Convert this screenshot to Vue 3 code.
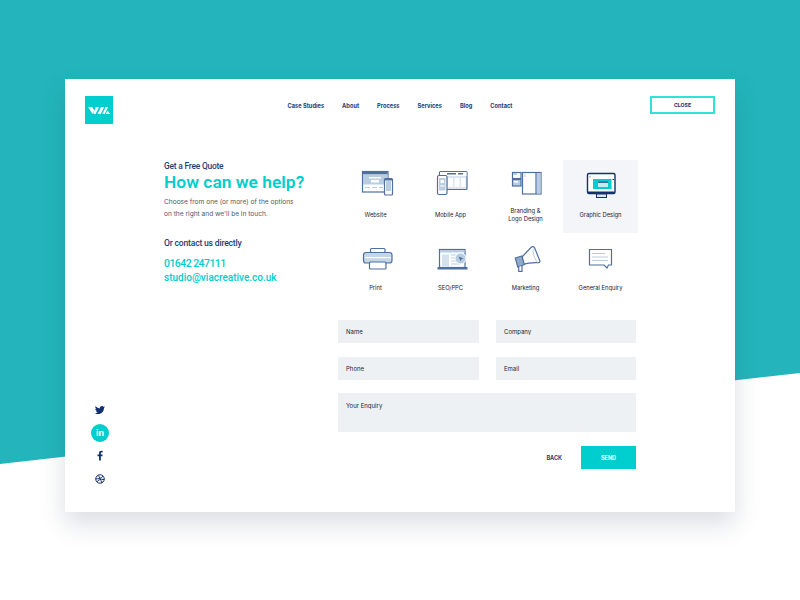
<template>
  <div class="page">
    <div class="backdrop"></div>
    <div class="card">
      <header class="top">
        <div class="logo">
          <svg width="28" height="28" viewBox="0 0 28 28">
            <path d="M3 11h4.200l2 3.500L7.600 18zM10.800 11H14l-3.500 7H8.800l-.4-1zM16 11h3.200l-3.500 7h-3.200zM20.800 11h2.400l-3.500 7h-2.400zM22.400 14.600l2.800 3.400h-4.500z" fill="#fff" />
          </svg>
        </div>
        <nav class="menu">
          <a v-for="item in menu" :key="item">{{ item }}</a>
        </nav>
        <button class="close">CLOSE</button>
      </header>

      <div class="content">
        <aside class="social">
          <div class="soc">
            <svg width="10" height="10" viewBox="0 0 24 24">
              <path fill="#12306e" d="M23.900 4.600c-.9.400-1.800.700-2.800.800 1-.6 1.800-1.600 2.200-2.700-1 .6-2 1-3.100 1.200A4.900 4.900 0 0 0 11.800 8.400 14 14 0 0 1 1.600 3.200a4.900 4.900 0 0 0 1.500 6.600c-.8 0-1.600-.2-2.200-.6v.1c0 2.400 1.700 4.400 3.900 4.800-.7.200-1.500.2-2.200.1.600 2 2.400 3.400 4.600 3.400A9.900 9.900 0 0 1 0 19.500 14 14 0 0 0 7.500 21.700c9.100 0 14.300-7.700 14-14.600 1-.7 1.800-1.600 2.400-2.500z" />
            </svg>
          </div>
          <div class="soc"><span class="linked">in</span></div>
          <div class="soc">
            <svg width="10" height="11" viewBox="0 0 24 24">
              <path fill="#12306e" d="M14 24V13.500h3.600l.6-4.200H14V6.700c0-1.200.4-2 2.100-2h2.200V.9C17.900.8 16.600.7 15.100.7c-3.200 0-5.400 1.900-5.400 5.500v3.100H6v4.200h3.700V24z" />
            </svg>
          </div>
          <div class="soc">
            <svg width="10" height="10" viewBox="0 0 20 20">
              <g fill="none" stroke="#12306e" stroke-width="2">
                <circle cx="10" cy="10" r="8.500" />
                <path d="M6 2.500c3 3.500 6 9 7.500 15.500M1.500 9.500c5 .5 11-.5 14.500-5M3.500 16c2.500-4 7-6.500 15-5" />
              </g>
            </svg>
          </div>
        </aside>

        <section class="intro">
          <p class="eyebrow">Get a Free Quote</p>
          <h1>How can we help?</h1>
          <p class="blurb">Choose from one (or more) of the options<br />on the right and we'll be in touch.</p>
          <p class="direct">Or contact us directly</p>
          <p class="phone">01642 247111</p>
          <p class="mail">studio@viacreative.co.uk</p>
        </section>

        <section class="right">
          <div class="options">
            <div class="option">
              <svg viewBox="0 0 75 45">
                <rect class="ln" x="24.500" y="6.500" width="25.500" height="20.500" fill="#fff" />
                <rect class="mid" x="25" y="7" width="24.500" height="2.500" />
                <rect class="soft" x="25" y="9.500" width="24.500" height="10" />
                <rect x="31" y="12" width="12" height="1.500" fill="#fff" />
                <rect x="33" y="15" width="8" height="2.500" fill="#fff" />
                <path class="lt" d="M27 22.500h5M34 22.500h5M41 22.500h4" />
                <rect class="ln" x="46.500" y="13.500" width="8" height="16.500" rx="1" fill="#fff" />
                <rect class="soft" x="48" y="16" width="5" height="10" />
                <rect class="mid" x="47" y="14" width="7" height="1.500" />
              </svg>
              <span>Website</span>
            </div>
            <div class="option">
              <svg viewBox="0 0 75 45">
                <rect class="ln" x="26.500" y="6.500" width="27.500" height="18" rx="1" fill="#dce6f0" />
                <rect x="27" y="7" width="26.500" height="4" fill="#fff" />
                <path class="mid" d="M34 8h9v1.500h-9zM45 8h5v1.500h-5z" />
                <path d="M35 13h5v9h-5zM41.500 13h5v9h-5zM48 13h4.500v9H48z" fill="#fff" />
                <rect class="ln" x="24.500" y="10.500" width="9.500" height="19" rx="1.500" fill="#fff" />
                <rect class="soft" x="26" y="13" width="6.500" height="12.500" />
                <rect x="27.500" y="15" width="3.500" height="3" fill="#fff" />
                <rect x="27" y="20.500" width="4.500" height="1" fill="#fff" />
              </svg>
              <span>Mobile App</span>
            </div>
            <div class="option">
              <svg viewBox="0 0 75 45">
                <rect class="ln" x="24.500" y="7.500" width="8.500" height="6" fill="#fff" />
                <rect class="soft" x="25" y="8" width="4" height="2" />
                <rect class="ln" x="24.500" y="14.500" width="8.500" height="6.500" fill="#b9cde0" />
                <rect x="26" y="16" width="4" height="1.500" fill="#fff" />
                <rect class="ln" x="34.500" y="7.500" width="18.500" height="21.500" fill="#fff" />
                <rect class="soft" x="48.500" y="8" width="4" height="20.500" />
                <rect x="36" y="9" width="2" height="3" fill="#dce6f0" />
                <path class="ln" d="M48 7.500v21.500" />
              </svg>
              <span>Branding &amp;<br />Logo Design</span>
            </div>
            <div class="option active">
              <svg viewBox="0 0 75 45">
                <rect x="24.500" y="8.500" width="27.500" height="20" rx="1.500" fill="#fff" stroke="#12306e" stroke-width="1.400" />
                <rect x="25" y="26.500" width="26.500" height="2" fill="#12306e" />
                <rect x="30" y="14" width="18.500" height="10" fill="#00cdcd" />
                <rect x="35" y="16.500" width="10" height="5.500" fill="#bfeeee" />
                <rect x="35" y="16.500" width="10" height="1.200" fill="#12306e" />
                <rect x="49.500" y="14" width="1.500" height="1" fill="#12306e" />
                <rect x="26" y="11" width="2" height="1.500" fill="#b9cde0" />
                <rect x="33.500" y="29" width="10" height="3.500" fill="#dde4ee" stroke="#12306e" stroke-width="1" />
              </svg>
              <span>Graphic Design</span>
            </div>
            <div class="option">
              <svg viewBox="0 0 75 45">
                <rect class="ln" x="32.500" y="10.500" width="14.500" height="4" rx="1" fill="#fff" />
                <rect class="ln" x="25.500" y="14.500" width="28.500" height="10.500" rx="2.500" fill="#c5d6e6" />
                <rect x="27" y="19" width="26" height="1.200" fill="#fff" />
                <rect class="ln" x="31.500" y="24" width="16.500" height="7" rx="1" fill="#fff" />
              </svg>
              <span>Print</span>
            </div>
            <div class="option">
              <svg viewBox="0 0 75 45">
                <rect class="ln" x="26.500" y="11.500" width="25.500" height="18" fill="#fff" />
                <rect class="soft" x="27" y="12" width="24.500" height="2.500" />
                <rect x="29" y="16.500" width="7" height="12" fill="#d5e1ec" />
                <path class="lt" d="M38 17h5M38 20h4M38 23h9M38 26h9" />
                <rect class="mid" x="24.500" y="29" width="30" height="2.500" />
                <circle cx="47.500" cy="20.500" r="5.500" fill="#b9cde0" stroke="#fff" stroke-width="1" />
                <path class="mid" d="M45.500 18.500l5 2-2 .8-.8 2z" />
              </svg>
              <span>SEO/PPC</span>
            </div>
            <div class="option">
              <svg viewBox="0 0 75 45">
                <path class="ln" d="M34 19 43 9.500C44.500 8 46 8.500 46.700 10l5 12.500c.6 1.500-.2 2.300-1.700 2.100-6-.2-11 .4-15.500 1.700z" fill="#fff" />
                <path class="lt" d="M45.500 10.500c-1 3 .5 9.500 4 14" />
                <path class="ln" d="M27.300 20 34 18l2.300 8.700-6.600 2.300z" fill="#8fa9c8" />
                <path class="ln" d="M30.700 29v4.300H34V28" fill="#fff" />
              </svg>
              <span>Marketing</span>
            </div>
            <div class="option">
              <svg viewBox="0 0 75 45">
                <path class="ln" d="M26.500 11.500h22v15.500h-3l-1.500 3-3-3h-14.500z" fill="#fff" />
                <path class="lt" d="M29 15.500h13M29 19h16M29 22.500h16" />
              </svg>
              <span>General Enquiry</span>
            </div>
          </div>

          <form class="quote" @submit.prevent>
            <input placeholder="Name" />
            <input placeholder="Company" />
            <input placeholder="Phone" />
            <input placeholder="Email" />
            <textarea placeholder="Your Enquiry"></textarea>
            <div class="actions">
              <a class="back">BACK</a>
              <button class="send">SEND</button>
            </div>
          </form>
        </section>
      </div>
    </div>
  </div>
</template>

<script setup>
const menu = ['Case Studies', 'About', 'Process', 'Services', 'Blog', 'Contact']
</script>

<style>
html, body { margin: 0; background: #fff; }
</style>

<style scoped>
.page {
  position: relative;
  width: 800px;
  height: 600px;
  padding: 79px 65px 0;
  box-sizing: border-box;
  overflow: hidden;
  font-family: "Inter", "Liberation Sans", sans-serif;
}
.backdrop {
  position: absolute;
  inset: 0;
  background: #23b5bb;
  clip-path: polygon(0 0, 800px 0, 800px 373px, 0 464px);
}
.card {
  position: relative;
  width: 670px;
  height: 433px;
  background: #fff;
  box-shadow: 0 12px 24px rgba(40, 60, 90, 0.17);
}
.top {
  display: grid;
  grid-template-columns: 1fr auto 1fr;
  align-items: start;
  padding: 17px 20px 0;
}
.logo { width: 28px; height: 28px; background: #00cdcd; }
.logo svg { display: block; }
.menu {
  display: flex;
  gap: 18px;
  padding-top: 6px;
  font-size: 5.7px;
  font-weight: 700;
  color: #1d3c78;
}
.close {
  justify-self: end;
  width: 65px;
  height: 18px;
  padding: 0;
  background: #fff;
  border: 2px solid #2ee3d8;
  font-family: inherit;
  font-size: 5.2px;
  font-weight: 700;
  color: #12306e;
}
.content { display: flex; }
.social {
  width: 70px;
  height: 433px;
  margin: -45px 29px 0 0;
  padding-bottom: 22px;
  box-sizing: border-box;
  flex: none;
  display: flex;
  flex-direction: column;
  justify-content: flex-end;
}
.soc { height: 23px; display: flex; align-items: center; justify-content: center; }
.linked {
  width: 18px;
  height: 18px;
  border-radius: 50%;
  background: #00cdcd;
  color: #fff;
  font-size: 9px;
  font-weight: 700;
  line-height: 17px;
  text-align: center;
}
.intro { width: 174px; padding-top: 37px; font-family: "Roboto", "Liberation Sans", sans-serif; }
.intro p, .intro h1 { margin: 0; }
.eyebrow { font-size: 8.4px; line-height: 11px; font-weight: 500; letter-spacing: -0.2px; color: #1d3c78; }
.intro h1 { font-size: 17.4px; line-height: 20px; font-weight: 600; color: #00cdcd; }
.intro .blurb { margin-top: 5px; font-family: "Inter", "Liberation Sans", sans-serif; font-size: 6.6px; line-height: 11.5px; color: #4d5a6c; }
.intro .direct { margin-top: 18px; font-size: 8.6px; line-height: 11px; font-weight: 500; letter-spacing: -0.2px; color: #1d3c78; }
.intro .phone { margin-top: 8px; font-size: 10.5px; line-height: 13px; font-weight: 500; letter-spacing: -0.55px; color: #00cdcd; }
.intro .mail { margin-top: 1px; font-size: 10px; line-height: 14px; font-weight: 500; color: #00cdcd; }
.right { width: 300px; margin-top: 36px; }
.options { display: grid; grid-template-columns: repeat(4, 75px); grid-auto-rows: 73px; }
.option {
  display: flex;
  flex-direction: column;
  align-items: center;
  padding-top: 5px;
  box-sizing: border-box;
  font-size: 5.8px;
  line-height: 8px;
  color: #1a2230;
  text-align: center;
}
.option svg { width: 75px; height: 45px; flex: none; }
.option span { height: 10px; display: flex; align-items: center; }
.option.active { background: #f3f5f8; }
.ln { stroke: #4f6f9f; stroke-width: 1.2; }
path.ln:not([fill]) { fill: none; }
.lt { stroke: #b9cde0; stroke-width: 1; fill: none; }
.mid { fill: #4f6f9f; }
.soft { fill: #b9cde0; }
.quote {
  display: grid;
  grid-template-columns: 141px 140px;
  column-gap: 17px;
  row-gap: 14px;
  margin-top: 14px;
}
.quote input, .quote textarea {
  box-sizing: border-box;
  height: 23px;
  padding: 0 8px;
  border: 0;
  border-radius: 0;
  background: #eef1f4;
  font-family: inherit;
  font-size: 6px;
  outline: none;
}
.quote textarea {
  grid-column: 1 / -1;
  height: 39px;
  margin-top: -1px;
  padding-top: 9px;
  resize: none;
  display: block;
}
.quote input::placeholder, .quote textarea::placeholder { color: #1a2230; opacity: 1; }
.actions {
  grid-column: 1 / -1;
  display: flex;
  justify-content: flex-end;
  align-items: center;
  gap: 19px;
}
.back { font-size: 5.5px; font-weight: 700; color: #1d3c78; }
.send {
  width: 55px;
  height: 23px;
  padding: 0;
  border: 0;
  background: #00cdcd;
  color: #fff;
  font-family: inherit;
  font-size: 5.5px;
  font-weight: 700;
}
</style>
